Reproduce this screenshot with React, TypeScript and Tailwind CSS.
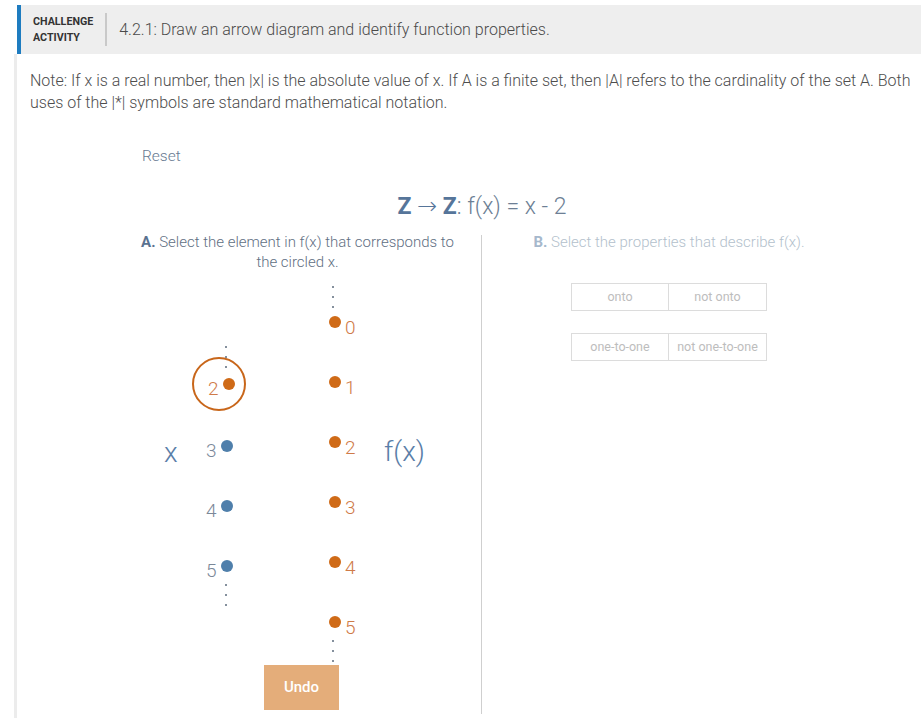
import React from "react";

const ORANGE = "bg-[#cf6a17]";
const BLUE = "bg-[#4f7fab]";

function Dot({ x, y, color }: { x: number; y: number; color: string }) {
  return (
    <div
      className={`absolute w-[12px] h-[12px] rounded-full ${color}`}
      style={{ left: x - 6, top: y - 6 }}
    />
  );
}

function Ellipsis({ x, y }: { x: number; y: number }) {
  return (
    <>
      {[0, 10, 20].map((d) => (
        <div
          key={d}
          className="absolute w-[2px] h-[2px] rounded-full bg-[#5d6b7d]"
          style={{ left: x - 1, top: y + d - 1 }}
        />
      ))}
    </>
  );
}

export default function App() {
  const oy = 280;
  const xs = [
    { y: 446, t: "3" },
    { y: 506, t: "4" },
    { y: 566, t: "5" },
  ];
  const fs = [
    { y: 322, t: "0" },
    { y: 382, t: "1" },
    { y: 442, t: "2" },
    { y: 502, t: "3" },
    { y: 562, t: "4" },
    { y: 622, t: "5" },
  ];
  return (
    <div className="w-[921px] h-[718px] bg-white overflow-hidden font-['Roboto',sans-serif] text-[#555]">
      <div className="h-[5px]" />
      <div className="ml-[17px] h-[49px] bg-[#eeeeee] border-l-4 border-[#1e7cc0] flex items-center">
        <div className="pl-[12px] pr-[12px] text-[10.7px] font-bold leading-[16px] text-[#333]">
          CHALLENGE
          <br />
          ACTIVITY
        </div>
        <div className="w-[2px] h-[33px] bg-[#c9c9c9]" />
        <div className="pl-[12px] text-[16px] text-[#4a4a4a] font-light">
          4.2.1: Draw an arrow diagram and identify function properties.
        </div>
      </div>
      <div className="ml-[14px] border-l-[3px] border-[#ececec] h-[664px] flex flex-col">
        <p className="pl-[13px] pr-[6px] pt-[16px] text-[16px] leading-[22px] font-light text-[#4d4d4d]">
          Note: If x is a real number, then |x| is the absolute value of x. If A is a finite set, then |A| refers to the cardinality of the set A. Both uses of the |*| symbols are standard mathematical notation.
        </p>
        <div className="pl-[125px] pt-[32px] text-[15.5px] leading-[20px] text-[#687a91] font-light">Reset</div>
        <div className="w-[684px] ml-[123px] mt-[26px] text-center text-[23px] leading-[28px] text-[#6d7f95] font-light">
          <span className="font-bold text-[#56759a]">Z</span>{" "}
          <span className="text-[#56759a] font-['DejaVu_Sans',sans-serif] font-extralight text-[24px]">→</span>{" "}
          <span className="font-bold text-[#56759a]">Z</span>: f(x) = x - 2
        </div>
        <div className="flex ml-[123px] mt-[11px] flex-1">
          <div className="w-[341px] flex flex-col">
            <div className="w-[315px] text-center text-[15px] leading-[20px] font-light text-[#5f6f83]">
              <span className="font-bold text-[#5a7290]">A.</span> Select the element in f(x) that corresponds to the circled x.
            </div>
            <div className="relative h-[380px] -ml-[140px] mt-[8px] w-[481px]">
              <div
                className="absolute w-[54px] h-[54px] rounded-full border-2 border-[#c8661a]"
                style={{ left: 219 - 27, top: 384 - 27 - oy }}
              />
              <Ellipsis x={226} y={347 - oy} />
              <Dot x={229} y={384 - oy} color={ORANGE} />
              <div className="absolute text-[19px] leading-[20px] font-light text-[#cf7a48]" style={{ left: 208, top: 389 - 10 - oy }}>2</div>
              {xs.map((d) => (
                <React.Fragment key={d.t}>
                  <Dot x={227} y={d.y - oy} color={BLUE} />
                  <div className="absolute text-[19px] leading-[20px] font-light text-[#7b8899]" style={{ left: 206, top: d.y + 5 - 10 - oy }}>
                    {d.t}
                  </div>
                </React.Fragment>
              ))}
              <Ellipsis x={226} y={585 - oy} />
              <Ellipsis x={333} y={287 - oy} />
              {fs.map((d) => (
                <React.Fragment key={d.t}>
                  <Dot x={335} y={d.y - oy} color={ORANGE} />
                  <div className="absolute text-[19px] leading-[20px] font-light text-[#cf7a48]" style={{ left: 345, top: d.y + 6 - 10 - oy }}>
                    {d.t}
                  </div>
                </React.Fragment>
              ))}
              <Ellipsis x={333} y={641 - oy} />
              <div className="absolute text-[28px] leading-[30px] font-light text-[#5a7ea8]" style={{ left: 164, top: 438 - oy }}>x</div>
              <div className="absolute text-[28px] leading-[30px] font-light text-[#5a7ea8]" style={{ left: 384, top: 437 - oy }}>f(x)</div>
            </div>
            <button className="ml-[124px] mt-[5px] w-[75px] h-[45px] bg-[#e4ad7a] text-white text-[15px] font-medium">Undo</button>
          </div>
          <div className="w-[1px] bg-[#cfcfcf] mt-[3px] mb-[4px]" />
          <div className="w-[374px] flex flex-col items-center">
            <div className="text-[15px] leading-[20px] font-light text-[#b3bfcc]">
              <span className="font-bold text-[#a6b8cc]">B.</span> Select the properties that describe f(x).
            </div>
            <div className="mt-[31px] flex">
              <div className="w-[98px] h-[28px] border border-[#dcdcdc] flex items-center justify-center text-[12.5px] text-[#bdbdbd]">onto</div>
              <div className="w-[98px] h-[28px] border border-l-0 border-[#dcdcdc] flex items-center justify-center text-[12.5px] text-[#bdbdbd]">not onto</div>
            </div>
            <div className="mt-[22px] flex">
              <div className="w-[98px] h-[28px] border border-[#dcdcdc] flex items-center justify-center text-[12.5px] text-[#bdbdbd]">one-to-one</div>
              <div className="w-[98px] h-[28px] border border-l-0 border-[#dcdcdc] flex items-center justify-center text-[12.5px] text-[#bdbdbd]">not one-to-one</div>
            </div>
          </div>
        </div>
      </div>
    </div>
  );
}
